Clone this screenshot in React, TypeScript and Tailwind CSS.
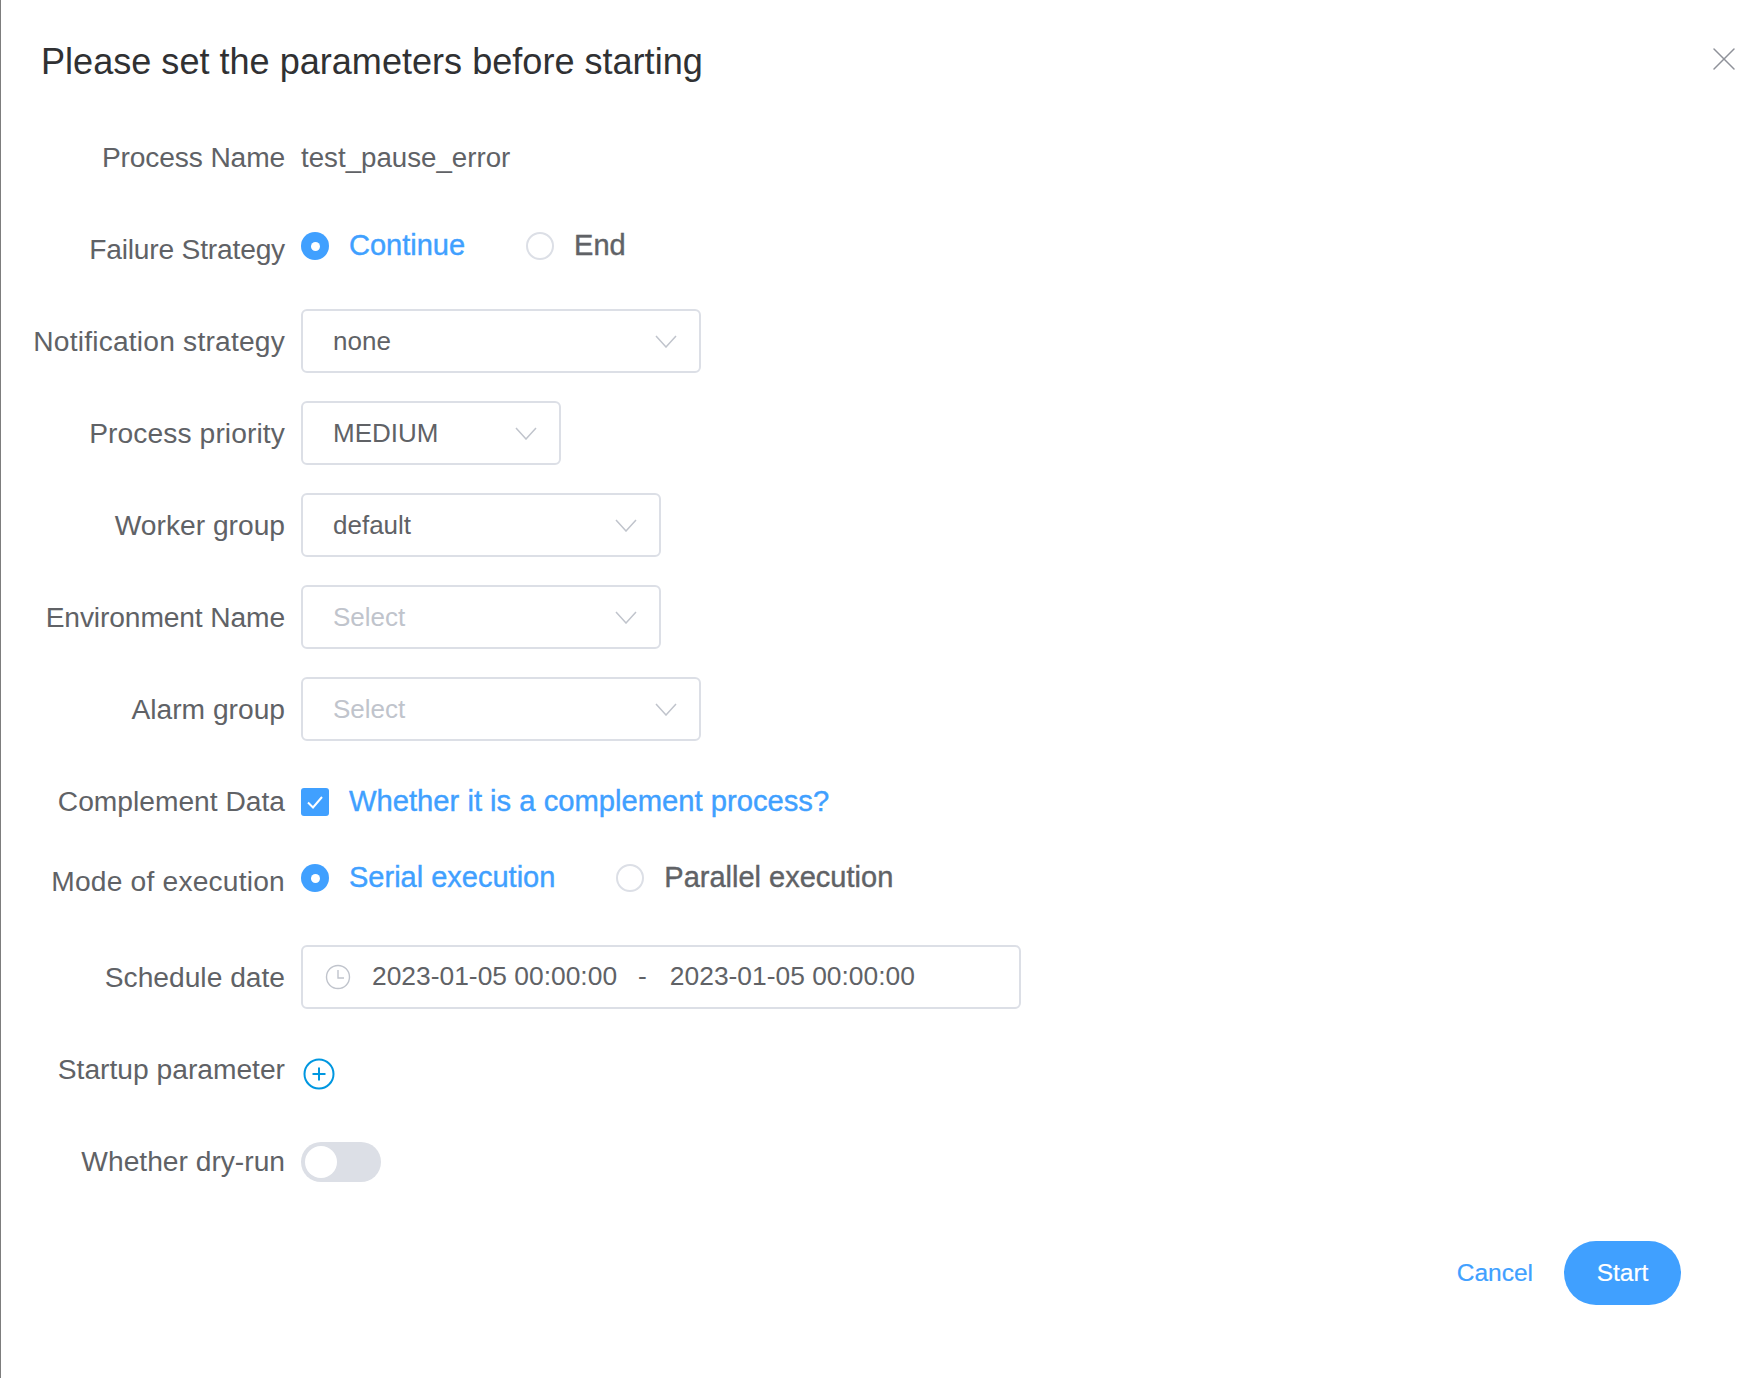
import { X } from "lucide-react"
import type { ReactNode } from "react"

const FONT = "font-['Liberation_Sans',Arial,sans-serif]"

function Row({ label, top, labelClass = "", children }: { label: string; top: string; labelClass?: string; children: ReactNode }) {
  return (
    <div className={`flex h-[64px] items-center gap-[16px] ${top}`}>
      <label className={`w-[284px] shrink-0 text-right text-[28.2px] text-[#606266] ${labelClass}`}>{label}</label>
      {children}
    </div>
  )
}

function Select({ value, width, placeholder = false }: { value: string; width: string; placeholder?: boolean }) {
  return (
    <div className={`flex h-[64px] items-center justify-between rounded-[6px] border-2 border-[#dcdfe6] pl-[30px] pr-[22px] ${width}`}>
      <span className={`text-[26px] ${placeholder ? "text-[#c0c4cc]" : "text-[#606266]"}`}>{value}</span>
      <svg viewBox="0 0 22 13" className="h-[13px] w-[22px]" fill="none" stroke="#c0c4cc" strokeWidth="1.5">
        <path d="M1 1 L11 12 L21 1" />
      </svg>
    </div>
  )
}

function Radio({ label, checked = false, className = "" }: { label: string; checked?: boolean; className?: string }) {
  return (
    <div className={`flex items-center gap-[20px] ${className}`}>
      {checked ? (
        <span className="flex h-[28px] w-[28px] items-center justify-center rounded-full bg-[#40a0ff]">
          <span className="h-[9px] w-[9px] rounded-full bg-white" />
        </span>
      ) : (
        <span className="h-[28px] w-[28px] rounded-full border-2 border-[#dcdfe6]" />
      )}
      <span className={`text-[29px] [-webkit-text-stroke:0.4px] ${checked ? "text-[#40a0ff]" : "text-[#606266]"}`}>{label}</span>
    </div>
  )
}

export default function App() {
  return (
    <div className={`relative h-[1378px] w-[1758px] overflow-hidden border-l border-[#7d7d7d] bg-white ${FONT}`}>
      <div className="absolute left-[-1px] top-[199px] h-[13px] w-[1px] bg-[#0b5c94]" />
      <div className="flex items-center justify-between pl-[40px] pr-[14px] pt-[38px]">
        <h2 className="text-[36.1px] leading-[48px] text-[#303133]">Please set the parameters before starting</h2>
        <X className="mb-[6px] h-[40px] w-[40px] text-[#8f9199]" strokeWidth={0.9} />
      </div>

      <Row label="Process Name" top="mt-[40px]" labelClass="tracking-[-0.15px] -translate-y-[1px]">
        <span className="text-[27.7px] text-[#606266]">test_pause_error</span>
      </Row>
      <Row label="Failure Strategy" top="mt-[24px]" labelClass="tracking-[-0.2px] translate-y-[3px]">
        <Radio label="Continue" checked />
        <Radio label="End" className="ml-[45px]" />
      </Row>
      <Row label="Notification strategy" top="mt-[31px]" labelClass="tracking-[0.2px]">
        <Select value="none" width="w-[400px]" />
      </Row>
      <Row label="Process priority" top="mt-[28px]" labelClass="tracking-[0.1px]">
        <Select value="MEDIUM" width="w-[260px]" />
      </Row>
      <Row label="Worker group" top="mt-[28px]">
        <Select value="default" width="w-[360px]" />
      </Row>
      <Row label="Environment Name" top="mt-[28px]" labelClass="tracking-[-0.12px]">
        <Select value="Select" width="w-[360px]" placeholder />
      </Row>
      <Row label="Alarm group" top="mt-[28px]">
        <Select value="Select" width="w-[400px]" placeholder />
      </Row>
      <Row label="Complement Data" top="mt-[29px]" labelClass="-translate-y-[1px]">
        <span className="flex h-[28px] w-[28px] items-center justify-center rounded-[3px] bg-[#40a0ff]">
          <svg viewBox="0 0 28 28" className="h-[28px] w-[28px]" fill="none" stroke="white" strokeWidth="2">
            <path d="M7 14.5 L12 19.5 L21 9" />
          </svg>
        </span>
        <span className="ml-[4px] text-[29.2px] text-[#40a0ff] [-webkit-text-stroke:0.4px]">Whether it is a complement process?</span>
      </Row>
      <Row label="Mode of execution" top="mt-[12px]" labelClass="tracking-[0.2px] translate-y-[3px]">
        <Radio label="Serial execution" checked />
        <Radio label="Parallel execution" className="ml-[45px]" />
      </Row>
      <Row label="Schedule date" top="mt-[35px]">
        <div className="flex h-[64px] w-[720px] items-center rounded-[6px] border-2 border-[#dcdfe6] pl-[22px] text-[26.4px] text-[#606266]">
          <svg viewBox="0 0 26 26" className="h-[26px] w-[26px]" fill="none" stroke="#c0c4cc" strokeWidth="1.4">
            <circle cx="13" cy="13" r="11.5" />
            <path d="M13 6 V14 H19" />
          </svg>
          <span className="ml-[21px]">2023-01-05 00:00:00</span>
          <span className="ml-[21px]">-</span>
          <span className="ml-[23px]">2023-01-05 00:00:00</span>
        </div>
      </Row>
      <Row label="Startup parameter" top="mt-[30px]" labelClass="-translate-y-[2px]">
        <svg viewBox="0 0 32 32" className="ml-[2px] h-[32px] w-[32px] translate-y-[3px]" fill="none" stroke="#0097e0" strokeWidth="2">
          <circle cx="16" cy="16" r="14.5" />
          <path d="M9.5 16 H22.5 M16 9.5 V22.5" />
        </svg>
      </Row>
      <Row label="Whether dry-run" top="mt-[27px]" labelClass="-translate-y-[1px]">
        <span className="flex h-[40px] w-[80px] items-center rounded-full bg-[#dcdfe6] pl-[4px]">
          <span className="h-[32px] w-[32px] rounded-full bg-white" />
        </span>
      </Row>

      <div className="mt-[47px] flex items-center justify-end gap-[31px] pr-[77px]">
        <span className="text-[24.5px] text-[#40a0ff] [-webkit-text-stroke:0.2px]">Cancel</span>
        <span className="flex h-[64px] w-[117px] items-center justify-center rounded-full bg-[#40a0ff] text-[24.5px] text-white [-webkit-text-stroke:0.2px]">Start</span>
      </div>
    </div>
  )
}
